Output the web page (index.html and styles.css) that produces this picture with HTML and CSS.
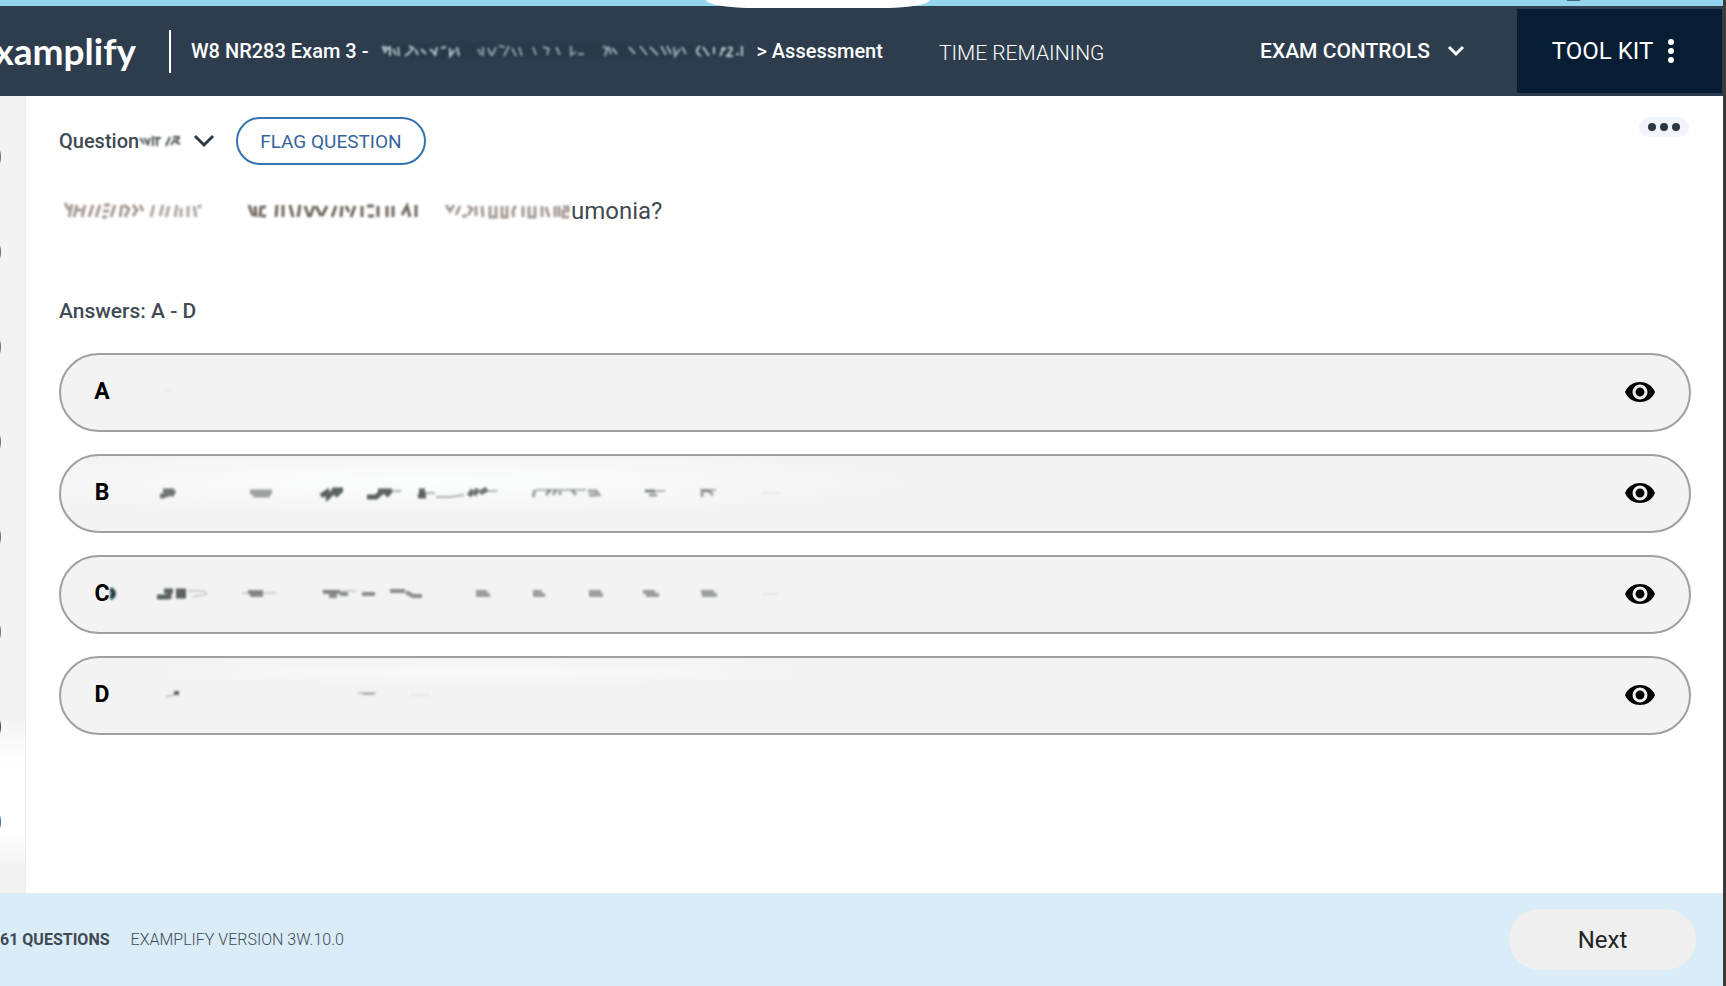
FILE: index.html
```html
<!DOCTYPE html>
<html lang="en">
<head>
    <meta charset="utf-8">
    <title>Examplify</title>
    <link rel="stylesheet" href="styles.css">
</head>
<body>
    <div class="window-strip"><div class="window-tab"></div><div class="window-mark"></div></div>

    <header class="header">
        <div class="brand"><span>Examplify</span></div>
        <div class="exam-title">
            <span>W8 NR283 Exam 3 -</span>
            <svg class="smudge" width="378" height="20" viewBox="-2 0 378 20" fill="none" stroke="#b4c4cb" stroke-width="2">
                <path stroke="#263643" stroke-width="14" opacity=".5" d="M8 10H362"/>
                <path d="M8 6l5 1-3 4zM15 5v10M18 8l3 6M23 6l1 9M34 5l4 2-4 5-4 3M40 8l3 6M46 8l5 5M55 8l5 5M62 6l-2 9M66 7l5-1M75 7v8l5-6M82 6l2 9"/>
                <path opacity=".75" d="M103 8l3 6M108 6v9M113 7l3 7M121 6l-4 9M124 5l6 1M134 5l-5 10M137 7l4 8M144 6l3 9M158 6l3 8M168 6l6 2-2 6M181 6l4 8M196 5v9l5-3M203 13h6"/>
                <path opacity=".85" d="M228 5l4 3-2 7M233 5l3 8M237 7l5 6M254 6l6 7M265 5l7 9M275 6l8 8M286 5l5 9M292 5l4 8M299 6l1 9 5-7M307 6l4 7"/>
                <path d="M325 5q-7 6 1 10M328 6l6 9M339 6v7M349 6l-4 9M346 8h5M353 7q6-2 3 3l-4 5h6M361 13h3M367 5v10"/>
            </svg>
            <span>&gt; Assessment</span>
        </div>
        <div class="time">TIME REMAINING</div>
        <button class="controls">EXAM CONTROLS
            <svg width="18" height="12" viewBox="0 0 18 12" fill="none" stroke="#fff" stroke-width="3"><path d="M2 2l7 7 7-7"/></svg>
        </button>
        <button class="toolkit">TOOL KIT
            <svg width="8" height="26" viewBox="0 0 8 26" fill="#fff"><circle cx="4" cy="4" r="3"/><circle cx="4" cy="13" r="3"/><circle cx="4" cy="22" r="3"/></svg>
        </button>
    </header>

    <div class="middle">
        <nav class="steps" aria-label="Questions">
            <span class="step"></span>
            <span class="step"></span>
            <span class="step"></span>
            <span class="step"></span>
            <span class="step"></span>
            <span class="step"></span>
            <span class="step dark"></span>
            <span class="step current"></span>
        </nav>

        <main class="content">
            <div class="question-bar">
                <button class="question-select">Question
                    <svg class="smudge" width="44" height="18" viewBox="0 0 44 18" fill="none" stroke="#46514f" stroke-width="2">
                        <path d="M1 6l4 6M5 6l5 7M11 6l-3 7M14 4v10M18 5v9M16 6h6M31 5l-4 9M34 5h7M36 7l-4 6M40 6l-3 4 4 2"/>
                    </svg>
                    <svg width="22" height="16" viewBox="0 0 22 16" fill="none" stroke="#2d3b46" stroke-width="3"><path d="M2 3l9 9 9-9"/></svg>
                </button>
                <button class="flag">FLAG QUESTION</button>
                <button class="more" aria-label="More">
                    <svg width="34" height="10" viewBox="0 0 34 10" fill="#2d3742"><circle cx="5" cy="5" r="4"/><circle cx="17" cy="5" r="4"/><circle cx="29" cy="5" r="4"/></svg>
                </button>
            </div>

            <p class="question-text">
                <svg class="smudge" width="512" height="20" viewBox="0 0 512 20" fill="none" stroke="#8d8179" stroke-width="3">
                    <path opacity=".8" d="M6 2l4 7M13 3l-3 13M18 4l-3 12M17 9h6M26 4l-3 12M34 4l-4 12M41 4l-4 12M45 4h6M44 10h6M43 16h5M56 4l-4 12M63 4l-2 12M65 4l5 4-4 8M74 4l4 5-4 6M81 4l3 6"/>
                    <path opacity=".7" d="M95 4l-3 12M104 4l-3 11M110 5l-3 11M118 4l-2 12M122 7v9M129 5v11M135 5l2 11M142 4l-3 3"/>
                    <path stroke="#71685d" d="M190 4l4 11M196 5l1 11M202 5l-1 11M203 6h4M203 15h4M218 4l-1 12M224 4v12M231 4l3 12M241 4l-2 12M246 5l4 11M255 5l-4 11M257 5l5 10M268 5l-5 10M277 5l-4 11M283 5l-1 11M287 5l3 6M296 5l-4 11M303 5v11M308 5h7M309 15h6M319 5v11M328 5v11M334 5v11M343 14l5-9 3 11M357 4v12"/>
                    <path opacity=".8" d="M387 4l4 6 4-6M401 5l-4 9M403 15h5M409 5l4 3-4 6M417 5v10M423 5l1 11M431 5v11h6V5M443 5v11h5V5M457 5q-5 5-2 11M464 5v11M470 5v11h6V5M483 5v11M487 6l3 10M496 5v11M500 5v11M504 6h5v4h-5v6h6"/>
                </svg><span>umonia?</span>
            </p>

            <h2 class="answers-title">Answers: A - D</h2>
            <ul class="answers">
                <li class="answer">
                    <button class="choice"><b>A</b>
                        <svg class="smudge" width="700" height="40" viewBox="0 0 700 40" fill="none" stroke="#dfe4e6" stroke-width="1"><path d="M54 20q4-3 8 0"/></svg>
                    </button>
                    <button class="eye" aria-label="Hide A"><svg width="30" height="22" viewBox="0 0 30 22"><path d="M0 11C3 4 9 1 15 1s12 3 15 10c-3 7-9 10-15 10S3 18 0 11z"/><circle cx="15" cy="11" r="6" fill="#000" stroke="#f3f3f3" stroke-width="3"/></svg></button>
                </li>
                <li class="answer faded">
                    <button class="choice"><b>B</b>
                        <svg class="smudge" width="700" height="40" viewBox="0 0 700 40" fill="none" stroke="#414948" stroke-width="5">
                            <path d="M50 23h5M53 18h11M57 18v6M64 17l-3 6" opacity=".75"/>
                            <path d="M140 19h22M143 22h17" opacity=".5"/>
                            <path d="M211 23l6-4 1 5 6-6M222 17h11M225 23l6-6M257 24h9l6-5M268 18h14M276 23l5-6M309 18h6M308 23h8" opacity=".85"/>
                            <path stroke-width="2" opacity=".4" d="M283 18h8M315 20h10M326 24h14l14-2M375 18h12M426 17h50M535 18h20M590 17h16"/>
                            <path opacity=".75" d="M359 23l4-6M364 22l4-6M370 20l7-4"/>
                            <path opacity=".5" stroke-width="3" d="M423 24l2-7M436 22l4-5M443 22l3-5M450 18v4M462 17l4 5M478 18h8l4 5M479 22h8M535 18h10M539 22h8M592 18h7l4 4M592 18v6"/>
                            <path stroke-width="1" opacity=".15" d="M652 20h18"/>
                        </svg>
                    </button>
                    <button class="eye" aria-label="Hide B"><svg width="30" height="22" viewBox="0 0 30 22"><path d="M0 11C3 4 9 1 15 1s12 3 15 10c-3 7-9 10-15 10S3 18 0 11z"/><circle cx="15" cy="11" r="6" fill="#000" stroke="#f3f3f3" stroke-width="3"/></svg></button>
                </li>
                <li class="answer">
                    <button class="choice"><b>C</b>
                        <svg class="smudge" width="700" height="40" viewBox="0 0 700 40" fill="none" stroke="#414948" stroke-width="5">
                            <path stroke="#243f43" d="M0 15q7 5 0 9"/>
                            <path d="M47 23h12M54 17h9M59 16v9M66 17h10M66 22h10" opacity=".85"/>
                            <path stroke-width="1" opacity=".4" d="M78 17h16l3 3-15 3M132 19h34M212 17h34"/>
                            <path opacity=".6" stroke-width="4" d="M138 18h15M140 21h13M213 18h17M219 22h8M230 20h8M252 20h13M280 17h15M296 18l7 4h9"/>
                            <path opacity=".5" stroke-width="4" d="M366 18h11M366 21h14M423 18h9M423 21h12M479 18h12M479 21h14M533 18h12M536 21h13M591 18h13M592 21h15"/>
                            <path stroke-width="1" opacity=".15" d="M652 20h16"/>
                        </svg>
                    </button>
                    <button class="eye" aria-label="Hide C"><svg width="30" height="22" viewBox="0 0 30 22"><path d="M0 11C3 4 9 1 15 1s12 3 15 10c-3 7-9 10-15 10S3 18 0 11z"/><circle cx="15" cy="11" r="6" fill="#000" stroke="#f3f3f3" stroke-width="3"/></svg></button>
                </li>
                <li class="answer faded-top">
                    <button class="choice"><b>D</b>
                        <svg class="smudge" width="700" height="40" viewBox="0 0 700 40" fill="none" stroke="#5e6766" stroke-width="4">
                            <path d="M64 18h5"/>
                            <path stroke-width="2" opacity=".3" d="M56 22l8-2M248 18h18"/>
                            <path stroke-width="2" opacity=".4" d="M253 19h11"/>
                            <path stroke-width="1" opacity=".15" d="M300 20h20"/>
                        </svg>
                    </button>
                    <button class="eye" aria-label="Hide D"><svg width="30" height="22" viewBox="0 0 30 22"><path d="M0 11C3 4 9 1 15 1s12 3 15 10c-3 7-9 10-15 10S3 18 0 11z"/><circle cx="15" cy="11" r="6" fill="#000" stroke="#f3f3f3" stroke-width="3"/></svg></button>
                </li>
            </ul>
        </main>
    </div>

    <footer class="footer">
        <strong>61 QUESTIONS</strong>
        <span class="version">EXAMPLIFY VERSION 3W.10.0</span>
        <button class="next">Next</button>
    </footer>
</body>
</html>
```
FILE: styles.css
```css
* {
    box-sizing: border-box;
}

body {
    display: flex;
    flex-direction: column;
    min-height: 100vh;
    margin: 0;
    border-right: 3px solid #3b3b3b;
    font-family: Roboto, "Liberation Sans", sans-serif;
    color: #3f4a53;
    background-color: #fff;
}

button {
    padding: 0;
    border: none;
    background: none;
    font-family: inherit;
    color: inherit;
    cursor: pointer;
}

svg {
    display: block;
    flex-shrink: 0;
}

.smudge {
    filter: blur(1px);
}

.window-strip {
    position: relative;
    height: 6px;
    background-color: #94d5ee;
}

/* bottom edge of the floating bar above the page */
.window-tab {
    position: absolute;
    top: 0;
    left: 41%;
    width: 224px;
    height: 8px;
    border-radius: 0 0 50px 50px / 0 0 8px 8px;
    background-color: #fff;
}

.window-mark {
    position: absolute;
    top: 0;
    right: 143px;
    width: 13px;
    height: 1px;
    background-color: #41617a;
}

.header {
    display: flex;
    align-items: center;
    height: 90px;
    padding-right: 1px;
    background-color: #2d3d4d;
    color: #fff;
}

.brand {
    display: flex;
    justify-content: flex-end;
    width: 136px;
    overflow: hidden;
    font: 700 37px/48px Lato, sans-serif;
}

.exam-title {
    display: flex;
    align-items: center;
    gap: 5px;
    height: 43px;
    margin-left: 33px;
    padding-left: 20px;
    border-left: 2px solid #fff;
    font-size: 20px;
    font-weight: 500;
    white-space: nowrap;
}

.time {
    margin-left: 56px;
    margin-right: auto;
    padding-top: 4px;
    font-size: 21px;
    font-weight: 300;
    white-space: nowrap;
}

.controls {
    display: flex;
    align-items: center;
    gap: 17px;
    margin-right: 52px;
    font-size: 21px;
    font-weight: 500;
    white-space: nowrap;
}

.toolkit {
    display: flex;
    align-items: center;
    justify-content: center;
    gap: 14px;
    width: 205px;
    height: 84px;
    padding-right: 12px;
    background-color: #071d33;
    font-size: 24px;
    white-space: nowrap;
}

.middle {
    display: flex;
    flex: 1;
}

.steps {
    display: flex;
    flex-direction: column;
    align-items: flex-end;
    gap: 51px;
    width: 26px;
    padding: 39px 24px 0 0;
    border-right: 1px solid #ececec;
    overflow: hidden;
    background: linear-gradient(#f3f3f3 78%, #fff 84%, #fff 92%, #f3f3f3 97%);
}

.step {
    flex-shrink: 0;
    width: 44px;
    height: 44px;
    border: 2px solid #69727d;
    border-radius: 50%;
}

.step.dark {
    border-color: #31506f;
}

.step.current {
    border-color: #3673ae;
}

.content {
    flex: 1;
    padding: 21px 32px 22px 33px;
}

.question-bar {
    display: flex;
    align-items: center;
}

.question-select {
    display: flex;
    align-items: center;
    font-size: 20px;
    font-weight: 500;
}

.question-select svg + svg {
    margin-left: 10px;
}

.flag {
    height: 48px;
    margin-left: 21px;
    padding: 0 22px;
    border: 2px solid #3673ae;
    border-radius: 24px;
    font-size: 19px;
    font-weight: 400;
    color: #35659a;
}

.more {
    display: flex;
    align-items: center;
    justify-content: center;
    align-self: flex-start;
    width: 50px;
    height: 20px;
    margin-left: auto;
    margin-right: 2px;
    border-radius: 10px;
    background-color: #f1f4f9;
}

.question-text {
    display: flex;
    align-items: center;
    margin: 30px 0 0;
    font-size: 24px;
    line-height: 32px;
}

.answers-title {
    margin: 72px 0 30px;
    font-size: 21px;
    font-weight: 500;
    line-height: 24px;
}

.answers {
    display: flex;
    flex-direction: column;
    gap: 22px;
    margin: 0;
    padding: 0;
    list-style: none;
}

.answer {
    display: flex;
    height: 79px;
    border: 2px solid #a0a0a0;
    border-radius: 40px;
    background-color: #f3f3f3;
}

.answer.faded {
    background-image: radial-gradient(ellipse 500px 34px at 370px 26px, #fcfdfd, #f3f3f3);
}

.answer.faded-top {
    background-image: radial-gradient(ellipse 360px 14px at 420px 14px, #fbfafa, #f3f3f3);
}

.choice {
    display: flex;
    flex: 1;
    align-items: center;
    padding: 0 0 2px 33px;
    font-size: 23px;
    color: #000;
}

.choice b {
    width: 16px;
}

.eye {
    padding: 0 34px 1px;
}

.footer {
    display: flex;
    align-items: center;
    height: 93px;
    padding-right: 27px;
    background-color: #d9ecf8;
    font-size: 16px;
}

.footer strong {
    font-weight: 700;
}

.version {
    margin-left: 21px;
    font-weight: 300;
}

.next {
    width: 187px;
    height: 61px;
    margin-left: auto;
    border-radius: 31px;
    background-color: #efefef;
    font-size: 24px;
    color: #222;
}
```
